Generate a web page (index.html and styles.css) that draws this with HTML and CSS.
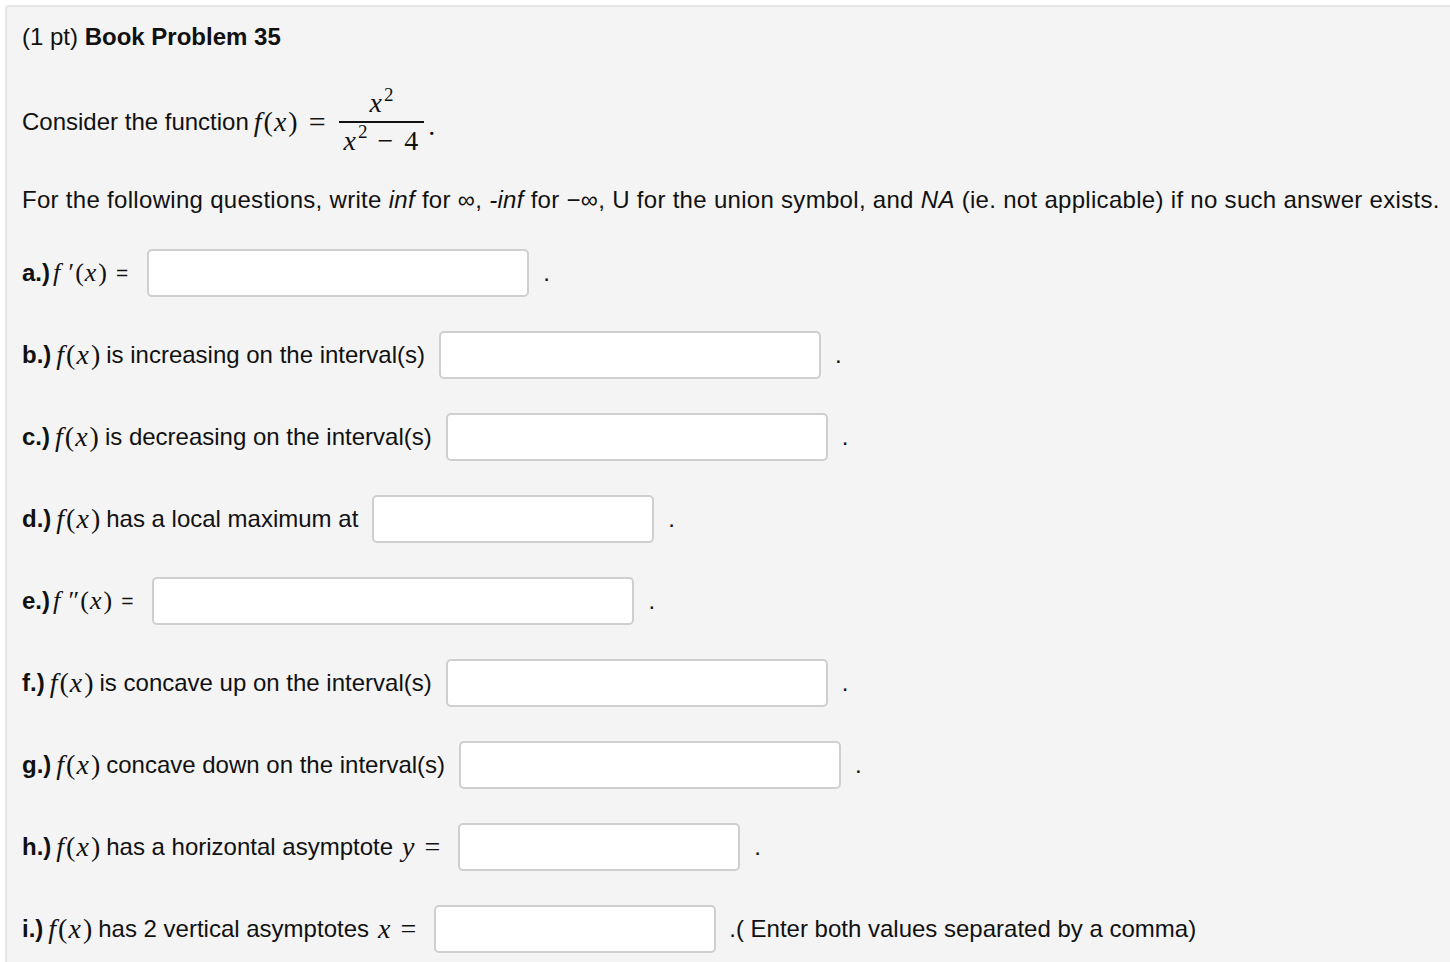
FILE: index.html
```html
<!doctype html>
<html>
<head>
<title>Book Problem 35</title>
<meta http-equiv="Content-Type" content="text/html; charset=utf-8" />
<link rel="stylesheet" href="styles.css">
</head>
<body>

<div class="problem">
	<div class="title">(1 pt) <b>Book Problem 35</b></div>

	<div class="consider">
		<span>Consider the function</span>
		<span class="math fx"><i>f</i>(<i>x</i>)</span>
		<span class="math eq">=</span>
		<span class="frac">
			<span class="num math"><i>x</i><sup>2</sup></span>
			<span class="den math"><i>x</i><sup>2</sup> &minus; 4</span>
		</span>
		<span class="math period">.</span>
	</div>

	<div class="note">
		For the following questions, write <i>inf</i> for &infin;, <i>-inf</i> for &minus;&infin;, U for the union symbol, and <i>NA</i> (ie. not applicable) if no such answer exists.
	</div>

	<div class="row first">
		<b>a.)</b>
		<span class="math small"><i>f</i>&thinsp;&prime;(<i>x</i>)</span>
		<span class="smalleq">=</span>
		<input class="answer" type="text" style="width: 382px">
		<span class="dot">.</span>
	</div>
	<div class="row">
		<b>b.)</b>
		<span class="math"><i>f</i>(<i>x</i>)</span>
		<span>is increasing on the interval(s)</span>
		<input class="answer" type="text" style="width: 382px">
		<span class="dot">.</span>
	</div>
	<div class="row">
		<b>c.)</b>
		<span class="math"><i>f</i>(<i>x</i>)</span>
		<span>is decreasing on the interval(s)</span>
		<input class="answer" type="text" style="width: 382px">
		<span class="dot">.</span>
	</div>
	<div class="row">
		<b>d.)</b>
		<span class="math"><i>f</i>(<i>x</i>)</span>
		<span>has a local maximum at</span>
		<input class="answer" type="text" style="width: 282px">
		<span class="dot">.</span>
	</div>
	<div class="row">
		<b>e.)</b>
		<span class="math small"><i>f</i>&thinsp;&Prime;(<i>x</i>)</span>
		<span class="smalleq">=</span>
		<input class="answer" type="text" style="width: 482px">
		<span class="dot">.</span>
	</div>
	<div class="row">
		<b>f.)</b>
		<span class="math"><i>f</i>(<i>x</i>)</span>
		<span>is concave up on the interval(s)</span>
		<input class="answer" type="text" style="width: 382px">
		<span class="dot">.</span>
	</div>
	<div class="row">
		<b>g.)</b>
		<span class="math"><i>f</i>(<i>x</i>)</span>
		<span>concave down on the interval(s)</span>
		<input class="answer" type="text" style="width: 382px">
		<span class="dot">.</span>
	</div>
	<div class="row">
		<b>h.)</b>
		<span class="math"><i>f</i>(<i>x</i>)</span>
		<span>has a horizontal asymptote</span>
		<span class="math var"><i>y</i> =</span>
		<input class="answer" type="text" style="width: 282px">
		<span class="dot">.</span>
	</div>
	<div class="row">
		<b>i.)</b>
		<span class="math"><i>f</i>(<i>x</i>)</span>
		<span>has 2 vertical asymptotes</span>
		<span class="math var"><i>x</i> =</span>
		<input class="answer" type="text" style="width: 282px">
		<span class="hint">.( Enter both values separated by a comma)</span>
	</div>
</div>

</body>
</html>
```

FILE: styles.css
```css
body {
	margin: 0;
	background: #ffffff;
	overflow: hidden;
	font-family: "Liberation Sans", Arial, sans-serif;
	font-size: 24px;
	color: #111111;
}

.problem {
	margin: 5px 0 0 5px;
	width: 1500px;
	height: 1000px;
	box-sizing: border-box;
	padding: 16px 15px;
	background-color: #f4f4f4;
	border: 2px solid #e6e6e6;
	border-radius: 4px;
}

.title {
	line-height: 28px;
}

.consider {
	margin-top: 31px;
	height: 80px;
	display: flex;
	align-items: center;
	white-space: nowrap;
}

.math {
	font-family: "Liberation Serif", "Times New Roman", serif;
	font-size: 28px;
	letter-spacing: 1px;
}

.math i {
	padding-right: 1px;
}

.math sup {
	font-size: 19px;
	position: relative;
	top: -3px;
	vertical-align: top;
	line-height: 1;
	letter-spacing: 0;
}

.fx {
	margin-left: 5px;
}

.eq {
	margin: 0 12px 0 10px;
	font-size: 30px;
}

.frac {
	display: inline-flex;
	flex-direction: column;
	align-items: stretch;
	text-align: center;
}

.frac .num {
	padding: 0 5px 3px;
	border-bottom: 2px solid #111111;
	line-height: 30px;
}

.frac .den {
	padding: 2px 5px 0;
	line-height: 32px;
	word-spacing: 2px;
}

.period {
	margin-left: 4px;
	position: relative;
	top: 4px;
}

.note {
	margin-top: 24px;
	line-height: 28px;
	letter-spacing: 0.3px;
	white-space: nowrap;
}

.row {
	display: flex;
	align-items: center;
	height: 48px;
	margin-top: 34px;
	white-space: nowrap;
}

.row.first {
	margin-top: 35px;
}

.row .math {
	margin-left: 5px;
	margin-right: 5px;
}

.row .var {
	margin-left: 9px;
	margin-right: 3px;
}

.row .small {
	font-size: 26px;
	margin-left: 3px;
	margin-right: 8px;
}

.smalleq {
	font-size: 21px;
	margin-right: 5px;
}

.answer {
	height: 48px;
	box-sizing: border-box;
	margin-left: 14px;
	background: #ffffff;
	border: 2px solid #cfcfcf;
	border-radius: 5px;
	font-size: 20px;
}

.dot {
	margin-left: 14px;
}

.hint {
	margin-left: 13px;
}
```
